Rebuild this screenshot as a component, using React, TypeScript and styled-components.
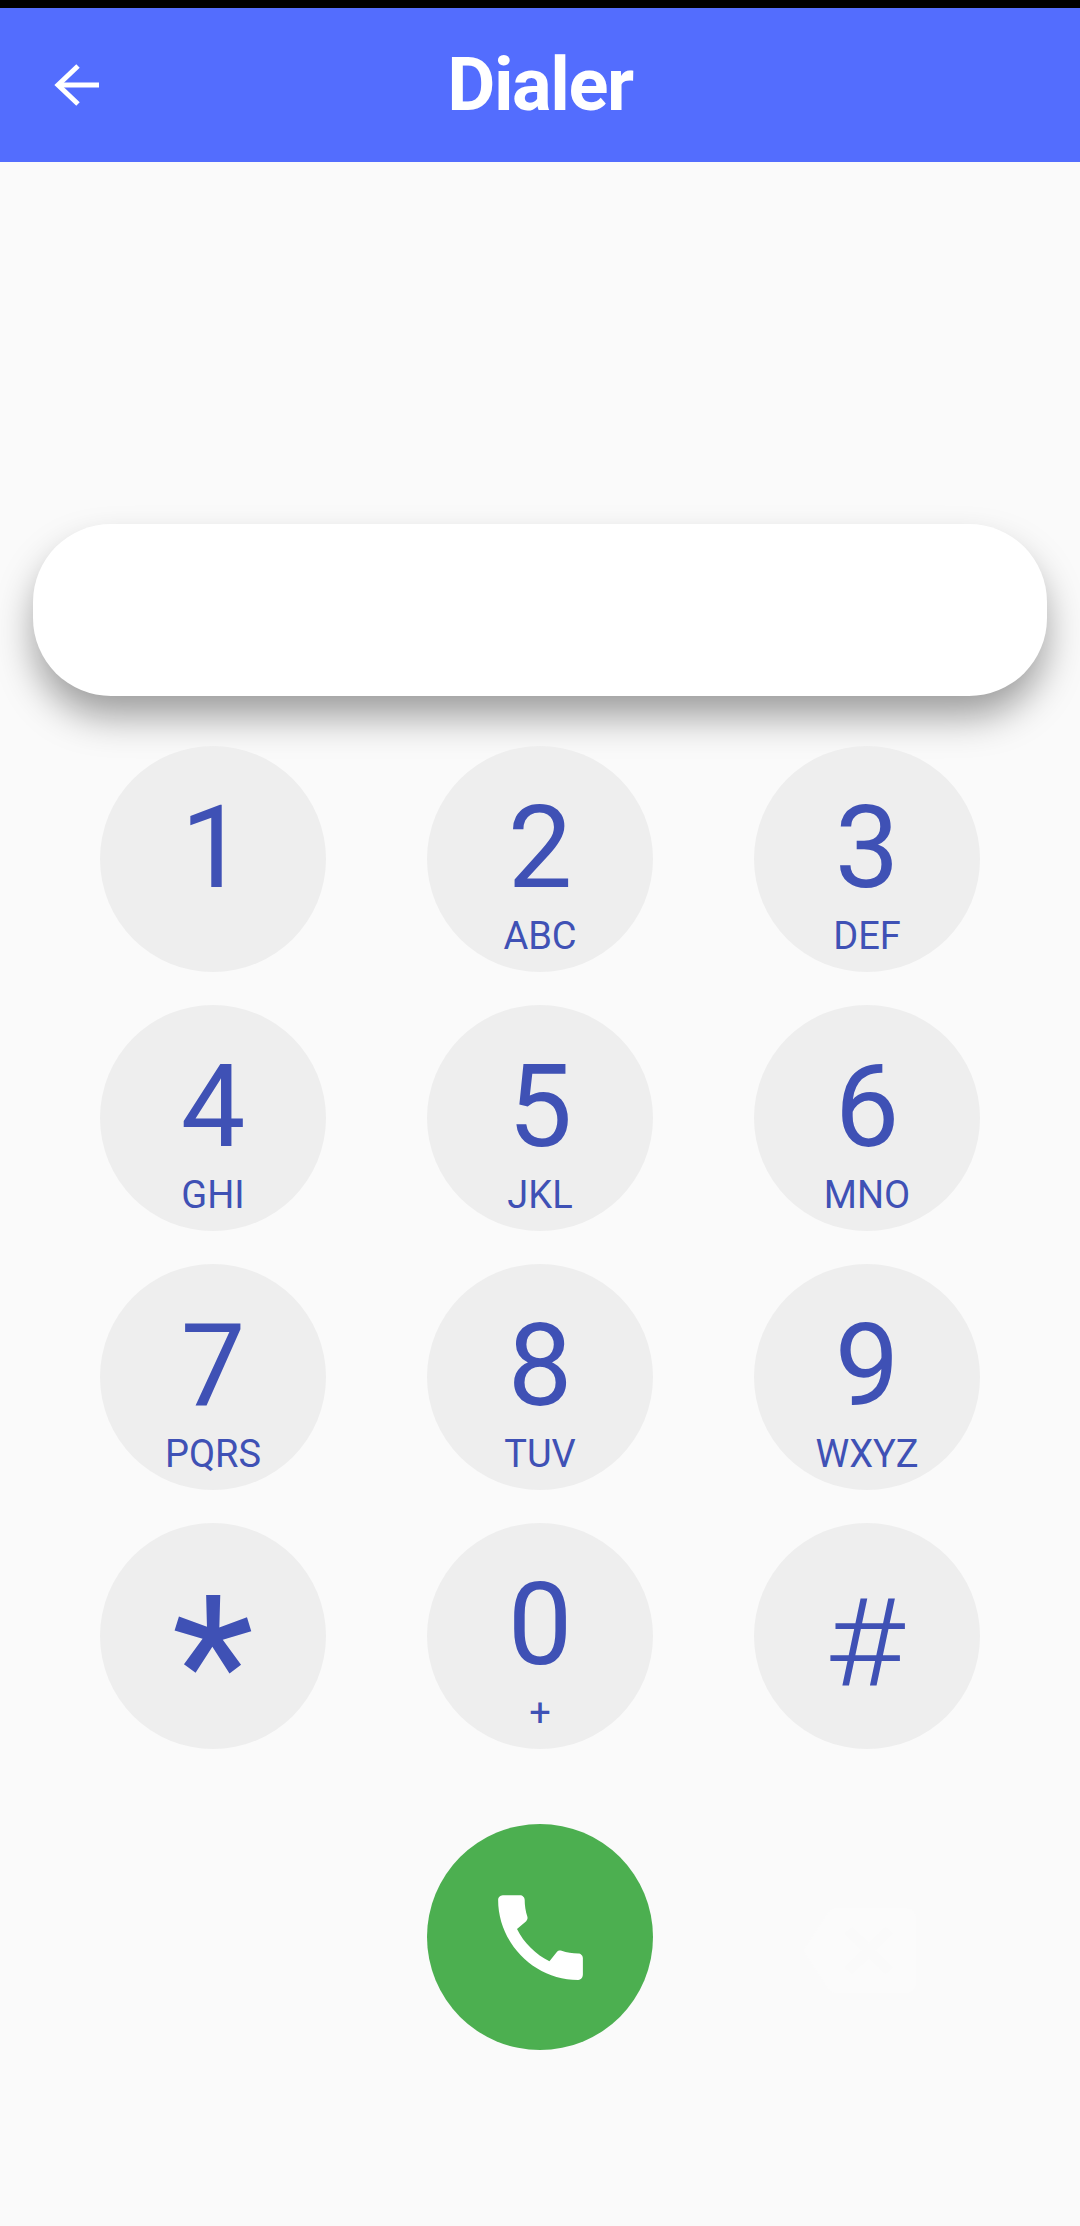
import styled, { createGlobalStyle } from "styled-components";

const keys = [
  { digit: "1", letters: "" },
  { digit: "2", letters: "ABC" },
  { digit: "3", letters: "DEF" },
  { digit: "4", letters: "GHI" },
  { digit: "5", letters: "JKL" },
  { digit: "6", letters: "MNO" },
  { digit: "7", letters: "PQRS" },
  { digit: "8", letters: "TUV" },
  { digit: "9", letters: "WXYZ" },
];

const App = () => {
  return (
    <Page>
      <GlobalStyle />
      <StatusBar />
      <Header>
        <BackButton>
          <svg width="66" height="66" viewBox="0 0 66 66" fill="none" stroke="#fff" strokeWidth="5">
            <path d="M34 14 L14 33 L34 52" />
            <path d="M14 33 H55" />
          </svg>
        </BackButton>
        <Title>Dialer</Title>
      </Header>
      <NumberField />
      <KeyGrid>
        {keys.map((key) => (
          <Key key={key.digit}>
            <Digit>{key.digit}</Digit>
            <Letters>{key.letters}</Letters>
          </Key>
        ))}
        <Key>
          <Star>*</Star>
        </Key>
        <Key>
          <Digit>0</Digit>
          <Letters>+</Letters>
        </Key>
        <Key>
          <Hash>#</Hash>
        </Key>
      </KeyGrid>
      <ActionRow>
        <span />
        <CallButton>
          <svg width="113" height="113" viewBox="0 0 24 24" fill="#fff">
            <path d="M20.01 15.38c-1.23 0-2.42-.2-3.53-.56-.35-.12-.74-.03-1.01.24l-1.57 1.97c-2.83-1.35-5.48-3.9-6.89-6.83l1.95-1.66c.27-.28.35-.67.24-1.02-.37-1.11-.56-2.3-.56-3.53 0-.54-.45-.99-.99-.99H4.19C3.65 3 3 3.24 3 3.99 3 13.28 10.73 21 20.01 21c.71 0 .99-.63.99-1.18v-3.45c0-.54-.45-.99-.99-.99z" />
          </svg>
        </CallButton>
        <DeleteButton>
          <svg width="113" height="113" viewBox="0 0 24 24" fill="#fbfbfb">
            <path d="M22 3H7c-.69 0-1.23.35-1.59.88L0 12l5.41 8.11c.36.53.9.89 1.59.89h15c1.1 0 2-.9 2-2V5c0-1.1-.9-2-2-2zm-3 12.59L17.59 17 14 13.41 10.41 17 9 15.59 12.59 12 9 8.41 10.41 7 14 10.59 17.59 7 19 8.41 15.41 12 19 15.59z" />
          </svg>
        </DeleteButton>
      </ActionRow>
    </Page>
  );
};

const GlobalStyle = createGlobalStyle`
  body {
    margin: 0;
    background: #fafafa;
    font-family: Roboto, "Liberation Sans", sans-serif;
  }
`;

const Page = styled.div`
  width: 1080px;
  height: 2226px;
  background: #fafafa;
  overflow: hidden;
`;

const StatusBar = styled.div`
  height: 8px;
  background: #000;
`;

const Header = styled.header`
  height: 154px;
  background: #536dfe;
  display: flex;
  align-items: center;
  justify-content: center;
  position: relative;
`;

const BackButton = styled.div`
  position: absolute;
  left: 44px;
  top: 44px;
  width: 66px;
  height: 66px;
`;

const Title = styled.h1`
  margin: 0;
  color: #fff;
  font-size: 74px;
  font-weight: 700;
  letter-spacing: -1.4px;
  line-height: 1;
`;

const NumberField = styled.div`
  height: 172px;
  margin: 362px 33px 0;
  background: #fff;
  border-radius: 78px;
  box-shadow: 0 22px 38px -2px rgba(0, 0, 0, 0.38);
`;

const KeyGrid = styled.div`
  display: grid;
  grid-template-columns: repeat(3, 226px);
  justify-content: space-between;
  row-gap: 33px;
  margin-top: 50px;
  padding: 0 100px;
`;

const Key = styled.div`
  width: 226px;
  height: 226px;
  border-radius: 50%;
  background: #eeeeee;
  color: #3f51b5;
  display: flex;
  flex-direction: column;
  align-items: center;
  padding-top: 44px;
  box-sizing: border-box;
`;

const Digit = styled.div`
  font-size: 115px;
  line-height: 115px;
  height: 115px;
`;

const Letters = styled.div`
  margin-top: 12px;
  font-size: 38px;
  line-height: 38px;
`;

const Star = styled(Digit)`
  font-size: 190px;
  line-height: 190px;
  margin-top: 3px;
`;

const Hash = styled(Digit)`
  font-size: 122px;
  font-weight: 300;
  line-height: 122px;
  margin-top: 17px;
  margin-left: -6px;
  transform: scaleX(1.12);
`;

const ActionRow = styled.div`
  display: grid;
  grid-template-columns: repeat(3, 226px);
  justify-content: space-between;
  margin-top: 75px;
  padding: 0 100px;
`;

const CallButton = styled.div`
  width: 226px;
  height: 226px;
  border-radius: 50%;
  background: #4caf50;
  display: flex;
  align-items: center;
  justify-content: center;
`;

const DeleteButton = styled.div`
  display: flex;
  align-items: center;
  justify-content: center;
  padding: 26px 16px 0 0;
`;

export default App;
